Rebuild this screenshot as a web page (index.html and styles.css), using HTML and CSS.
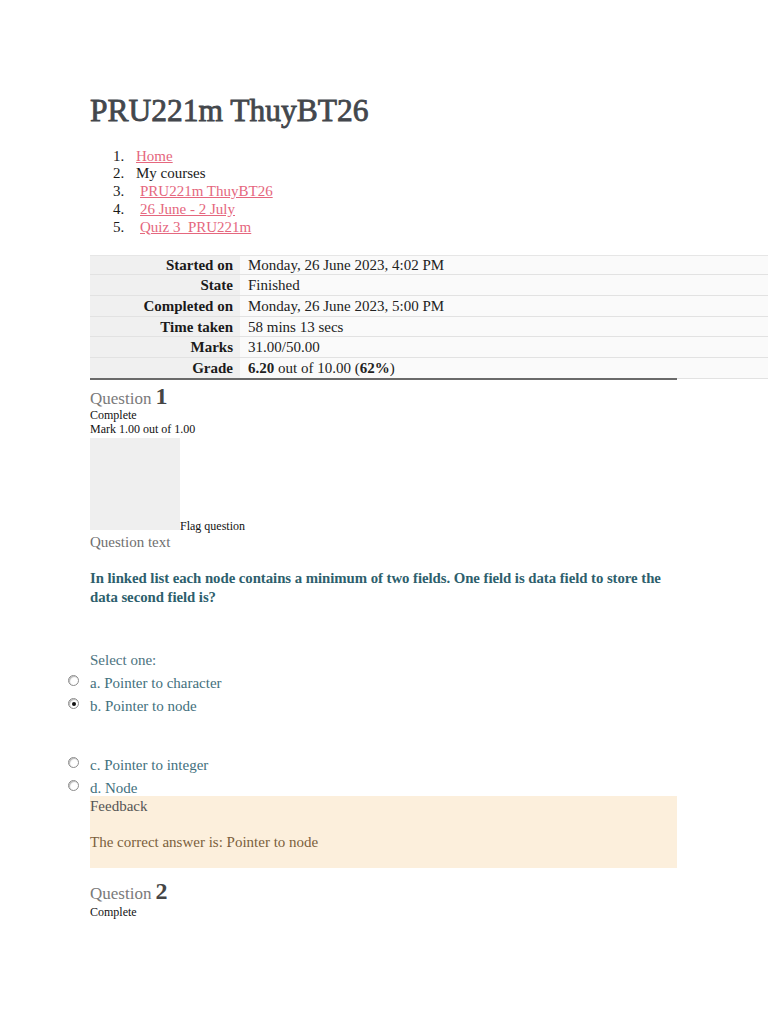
FILE: index.html
```html
<!DOCTYPE html>
<html>
<head>
<meta charset="utf-8">
<link rel="stylesheet" href="styles.css">
</head>
<body>
<div class="page">
  <h1 class="title">PRU221m ThuyBT26</h1>
  <ol class="crumbs">
    <li><a href="#">Home</a></li>
    <li>My courses</li>
    <li><a class="sp" href="#">PRU221m ThuyBT26</a></li>
    <li><a class="sp" href="#">26 June - 2 July</a></li>
    <li><a class="sp" href="#">Quiz 3_PRU221m</a></li>
  </ol>

  <div class="summary">
    <div class="row"><div class="th">Started on</div><div class="td">Monday, 26 June 2023, 4:02 PM</div></div>
    <div class="row"><div class="th">State</div><div class="td">Finished</div></div>
    <div class="row"><div class="th">Completed on</div><div class="td">Monday, 26 June 2023, 5:00 PM</div></div>
    <div class="row"><div class="th">Time taken</div><div class="td">58 mins 13 secs</div></div>
    <div class="row"><div class="th">Marks</div><div class="td">31.00/50.00</div></div>
    <div class="row"><div class="th">Grade</div><div class="td"><b>6.20</b> out of 10.00 (<b>62%</b>)</div></div>
  </div>
  <div class="bar"></div>

  <div class="qhead"><span class="qword">Question</span> <span class="qno">1</span></div>
  <div class="qmeta">Complete</div>
  <div class="qmeta">Mark 1.00 out of 1.00</div>
  <div class="flagrow"><div class="flagbox"></div><span class="flagtext">Flag question</span></div>
  <div class="qtextlabel">Question text</div>
  <p class="qtext">In linked list each node contains a minimum of two fields. One field is data field to store the data second field is?</p>

  <div class="select">Select one:</div>
  <div class="opt opt-a"><span class="radio"></span><span>a. Pointer to character</span></div>
  <div class="opt opt-b"><span class="radio checked"></span><span>b. Pointer to node</span></div>
  <div class="opt opt-c"><span class="radio"></span><span>c. Pointer to integer</span></div>
  <div class="opt opt-d"><span class="radio"></span><span>d. Node</span></div>

  <div class="feedback">
    <div class="fb-title">Feedback</div>
    <div class="fb-answer">The correct answer is: Pointer to node</div>
  </div>

  <div class="qhead q2"><span class="qword">Question</span> <span class="qno">2</span></div>
  <div class="qmeta q2meta">Complete</div>
</div>
</body>
</html>
```

FILE: styles.css
```css
html, body {
  margin: 0;
  padding: 0;
  background: #ffffff;
  overflow: hidden;
}
body {
  font-family: "Liberation Serif", "Times New Roman", serif;
  color: #1d1d1d;
}
.page {
  padding: 92px 0 0 90px;
  width: 587px;
}
.title {
  margin: 0;
  font-size: 31.5px;
  line-height: 38px;
  font-weight: normal;
  color: #43474c;
  -webkit-text-stroke: 0.8px #43474c;
}
.crumbs {
  list-style: none;
  margin: 17.5px 0 0 0;
  padding: 0 0 0 23px;
  font-size: 15px;
  line-height: 17.75px;
  counter-reset: crumb;
}
.crumbs li {
  counter-increment: crumb;
  color: #1a1a1a;
}
.crumbs li::before {
  content: counter(crumb) ".";
  display: inline-block;
  width: 23px;
  color: #1a1a1a;
}
.crumbs a {
  color: #e5677e;
  text-decoration: underline;
}
.crumbs a.sp {
  margin-left: 4px;
}
.summary {
  margin-top: 18.5px;
  width: 700px;
  font-size: 15px;
  border-top: 1px solid #e6e6e6;
}
.row {
  display: flex;
  height: 19.67px;
  line-height: 20px;
  border-bottom: 1px solid #e2e2e2;
}
.row:first-child {
  height: 18.67px;
  line-height: 19px;
}
.th {
  width: 143px;
  padding-right: 7px;
  text-align: right;
  font-weight: bold;
  background: #f0f0f0;
  color: #1a1a1a;
}
.td {
  flex: 1;
  padding-left: 8px;
  background: #fafafa;
  color: #222;
}
.bar {
  width: 587px;
  height: 2px;
  background: #6a6a6a;
  margin-top: -1px;
}
.qhead {
  margin-top: 5px;
  height: 23px;
  line-height: 22px;
  display: flex;
  align-items: baseline;
}
.qword {
  font-size: 17px;
  color: #7a7a7a;
}
.qno {
  font-size: 24px;
  font-weight: bold;
  color: #454545;
  margin-left: 4px;
}
.qmeta {
  font-size: 12px;
  line-height: 14.5px;
  color: #111;
}
.flagrow {
  margin-top: 1px;
  display: flex;
  align-items: flex-end;
}
.flagbox {
  width: 90px;
  height: 92px;
  background: #efefef;
}
.flagtext {
  font-size: 12px;
  line-height: 10px;
  color: #111;
  position: relative;
  top: 1px;
}
.qtextlabel {
  margin-top: 3px;
  font-size: 15px;
  line-height: 18px;
  color: #6f6f6f;
}
.qtext {
  margin: 18.5px 0 0 0;
  width: 592px;
  font-size: 14.8px;
  line-height: 19px;
  font-weight: bold;
  color: #2e5f6d;
  letter-spacing: -0.05px;
}
.select {
  margin-top: 44px;
  font-size: 15px;
  line-height: 19px;
  color: #4c7380;
}
.opt {
  display: flex;
  margin-left: -22px;
  font-size: 15px;
  line-height: 19px;
  color: #43707d;
}
.opt-a { margin-top: 4px; }
.opt-b { margin-top: 4px; }
.opt-c { margin-top: 40px; }
.opt-d { margin-top: 4px; }
.radio {
  box-sizing: border-box;
  width: 11px;
  height: 11px;
  margin-top: 1px;
  margin-right: 11px;
  border-radius: 50%;
  border: 1px solid #8c8c8c;
  background: #ffffff;
  box-shadow: inset 1px 1px 1px #b8b8b8;
  position: relative;
  flex: none;
}
.radio.checked::after {
  content: "";
  position: absolute;
  left: 2.5px;
  top: 2.5px;
  width: 4px;
  height: 4px;
  border-radius: 50%;
  background: #111;
}
.feedback {
  margin-top: -2px;
  background: #fcefdc;
  padding: 1px 0 17px 0;
  font-size: 15px;
  line-height: 18px;
}
.fb-title {
  color: #555555;
}
.fb-answer {
  margin-top: 18px;
  color: #7b5f3c;
}
.q2 {
  margin-top: 12px;
}
.q2meta {
  margin-top: 2px;
}
```
